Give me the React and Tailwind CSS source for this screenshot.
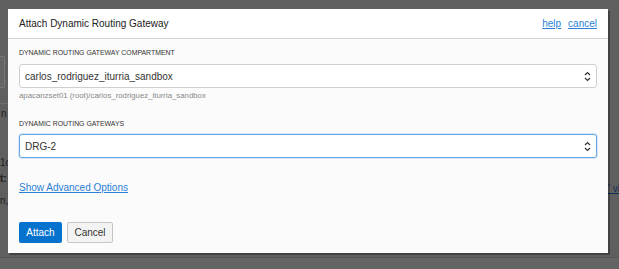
import React from "react";

const Chevrons = () => (
  <svg width="7" height="11" viewBox="0 0 7 11" fill="none" stroke="#333" strokeWidth="1.2">
    <path d="M1 4 L3.5 1.5 L6 4" />
    <path d="M1 7 L3.5 9.5 L6 7" />
  </svg>
);

const Select = ({ value, focused }) => (
  <div
    className={
      "h-[24px] flex items-center justify-between pl-[5px] pr-[5px] bg-white rounded-[3px] border " +
      (focused ? "border-[#6aa7e3] shadow-[0_0_0_1px_rgba(106,167,227,0.25)]" : "border-[#cfcfcf]")
    }
  >
    <span className="text-[10px] text-[#333]">{value}</span>
    <Chevrons />
  </div>
);

export default function App() {
  return (
    <div
      className="relative w-[619px] h-[269px] overflow-hidden bg-[#5f5f5f]"
      style={{ fontFamily: '"Liberation Sans", Arial, sans-serif' }}
    >
      {/* dimmed page behind the dialog */}
      <div className="flex h-full">
        <div className="w-[8px] flex flex-col">
          <div className="h-[56px]" />
          <div className="h-[32px] w-[5px] border border-l-0 border-[#777] bg-[#646464] rounded-r-[2px]" />
          <div className="h-[15px]" />
          <div className="h-[1px] bg-[#6f6f6f]" />
          <div className="h-[4px]" />
          <div className="text-[10px] leading-[12px] text-[#1e1e1e] whitespace-nowrap pl-[1px]">n</div>
          <div className="h-[37px]" />
          <div className="text-[10px] leading-[12px] text-[#1e1e1e] whitespace-nowrap">1c</div>
          <div className="h-[4px]" />
          <div className="text-[10px] leading-[12px] font-bold text-[#1e1e1e] whitespace-nowrap">t:</div>
          <div className="h-[10px]" />
          <div className="text-[10px] leading-[12px] text-[#1e1e1e] whitespace-nowrap">n,</div>
          <div className="flex-1" />
        </div>
        <div className="flex-1" />
        <div className="w-[11px] flex flex-col">
          <div className="h-[183px]" />
          <div className="text-[10px] leading-[12px] text-[#0f2f5a] underline whitespace-nowrap">' vi</div>
        </div>
      </div>
      <div className="absolute left-0 right-0 bottom-0 h-[12px] bg-[#646464] border-t border-[#555]" />

      {/* dialog */}
      <div className="absolute left-[8px] top-[9px] w-[600px] h-[244px] bg-[#fbfbfb] shadow-[2px_2px_0_rgba(0,0,0,0.3)] flex flex-col">
        <div className="h-[30px] shrink-0 bg-white border-b border-[#d6d6d6] flex items-center justify-between px-[11px]">
          <span className="text-[10px] text-[#222]">Attach Dynamic Routing Gateway</span>
          <div className="flex gap-[7px] text-[10px]">
            <span className="text-[#2a7fd6] underline">help</span>
            <span className="text-[#2a7fd6] underline">cancel</span>
          </div>
        </div>

        <div className="px-[11px] flex flex-col">
          <div className="mt-[10px] text-[6.9px] leading-[8px] text-[#333]">
            DYNAMIC ROUTING GATEWAY COMPARTMENT
          </div>
          <div className="mt-[7px]">
            <Select value="carlos_rodriguez_iturria_sandbox" />
          </div>
          <div className="mt-[3px] text-[7.8px] leading-[10px] text-[#888]">
            apacanzset01 (root)/carlos_rodriguez_iturria_sandbox
          </div>

          <div className="mt-[19px] text-[6.9px] leading-[8px] text-[#333]">
            DYNAMIC ROUTING GATEWAYS
          </div>
          <div className="mt-[6px]">
            <Select value="DRG-2" focused />
          </div>

          <div className="mt-[24px] text-[10px] leading-[12px]">
            <span className="text-[#2a7fd6] underline">Show Advanced Options</span>
          </div>

          <div className="mt-[28px] flex gap-[5px]">
            <button className="w-[43px] h-[21px] rounded-[2px] bg-[#0572ce] text-white text-[10px]">
              Attach
            </button>
            <button className="w-[46px] h-[21px] rounded-[2px] bg-[#f3f3f3] border border-[#c6c6c6] text-[#333] text-[10px]">
              Cancel
            </button>
          </div>
        </div>
      </div>
    </div>
  );
}
